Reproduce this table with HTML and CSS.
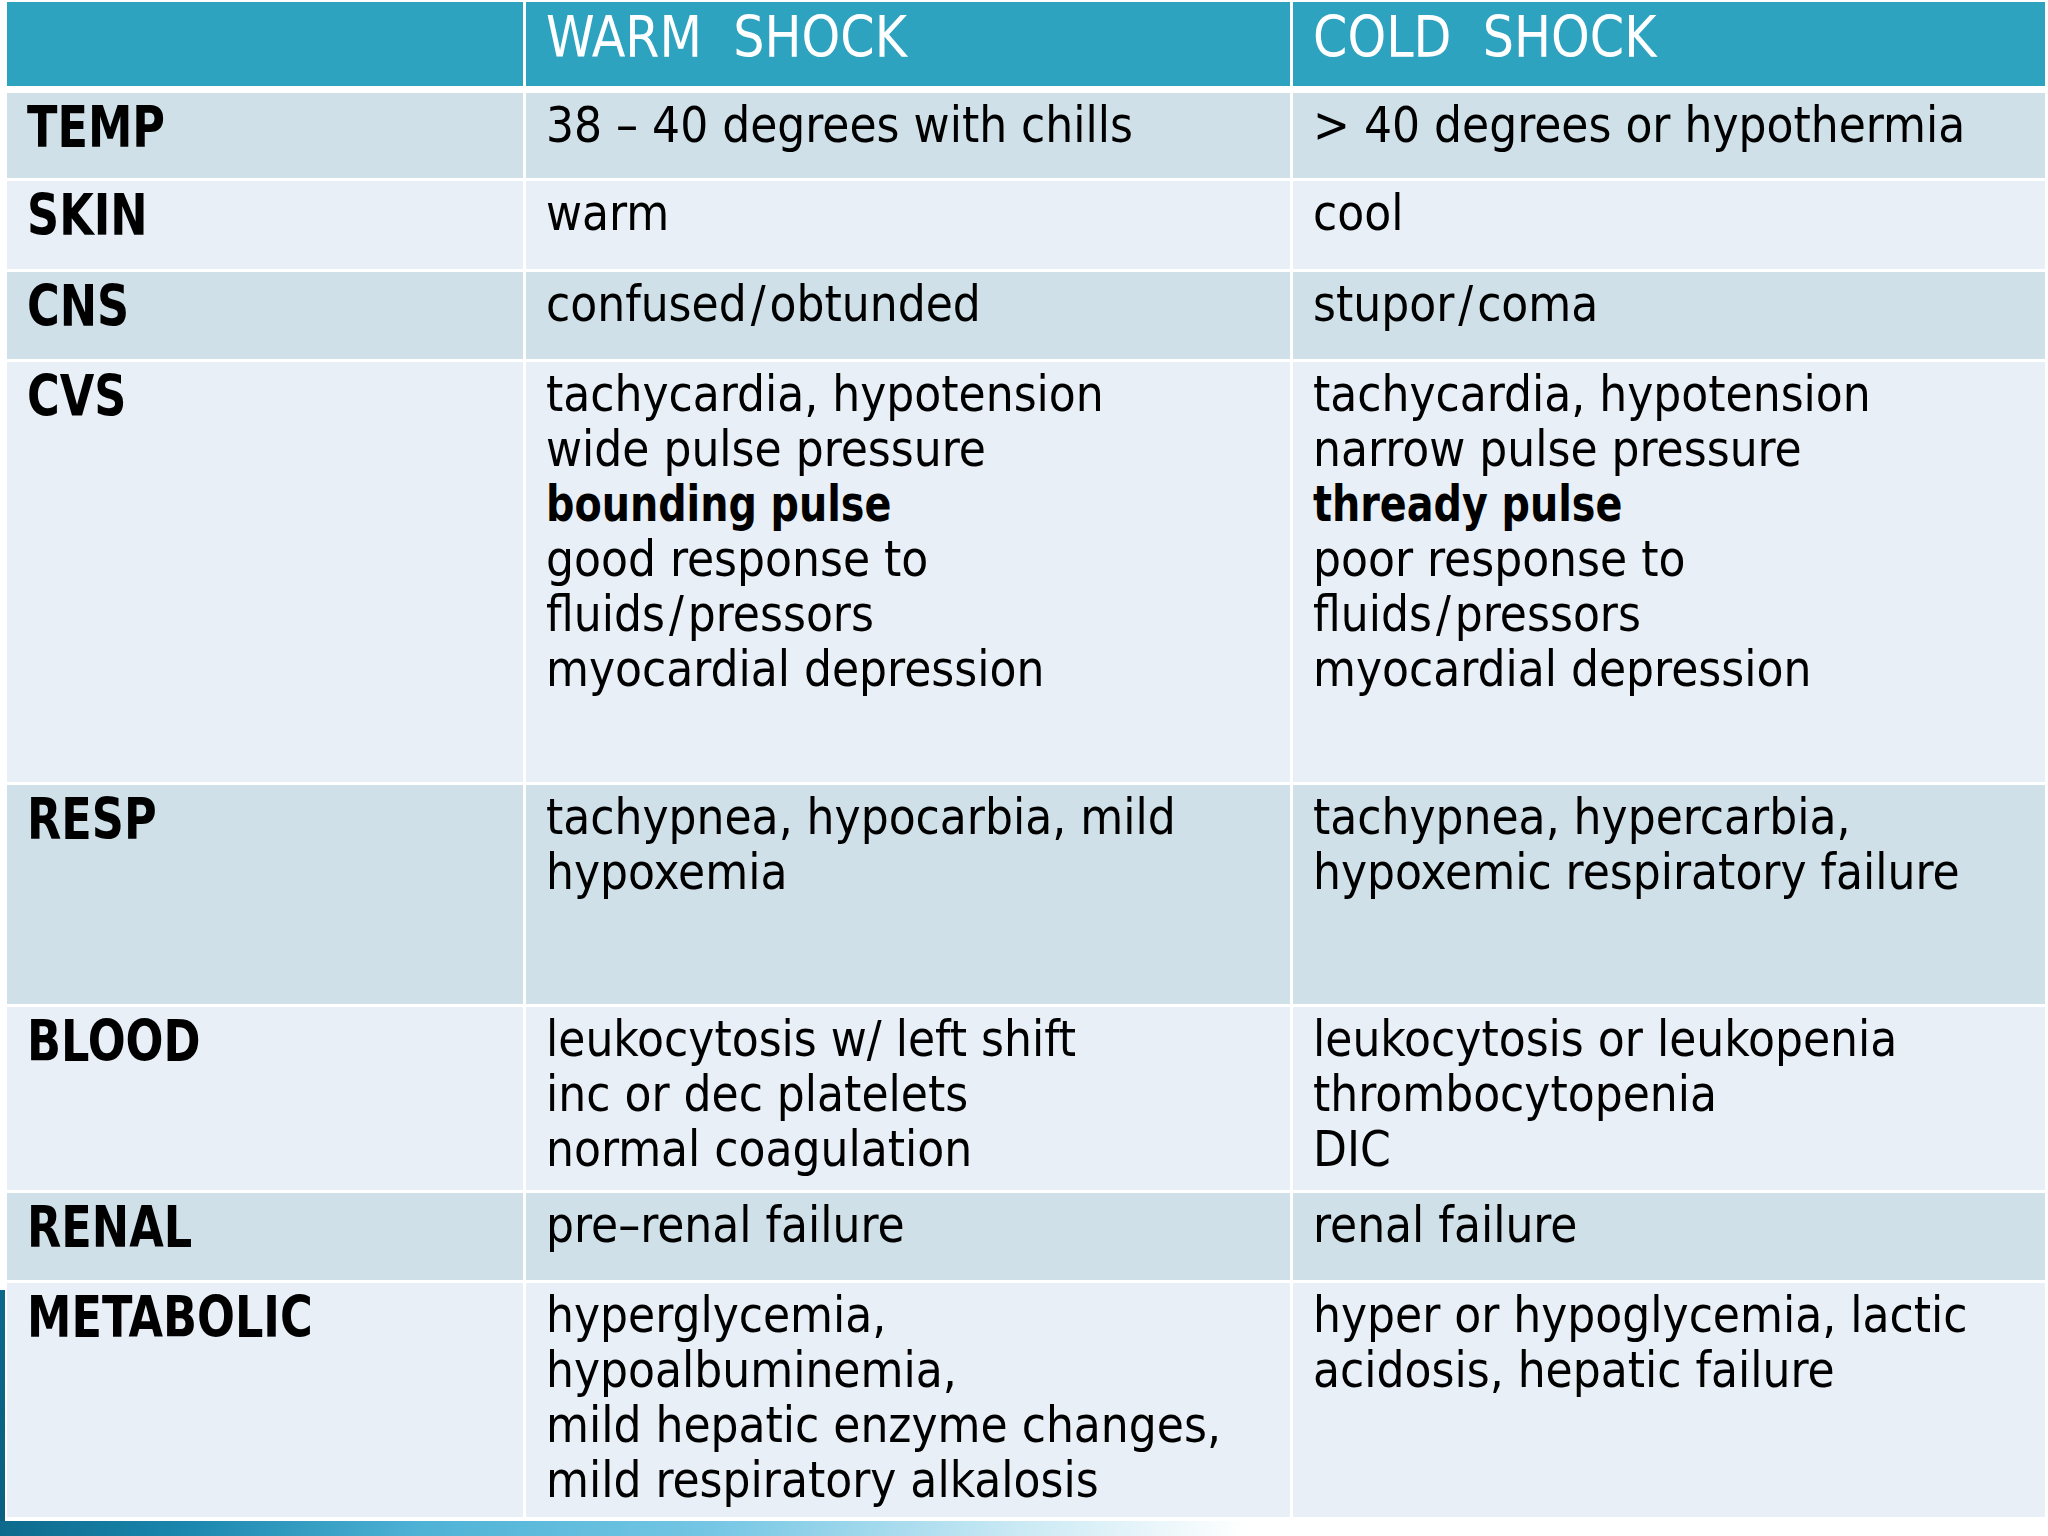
FILE: index.html
```html
<!DOCTYPE html>
<html lang="en">
<head>
<meta charset="utf-8">
<title>Warm vs Cold Shock</title>
<link rel="stylesheet" href="styles.css">
</head>
<body>
<div class="slide">
  <div class="table">
    <div class="cell head"></div>
    <div class="cell head"><span class="ht">WARM&nbsp; SHOCK</span></div>
    <div class="cell head"><span class="ht">COLD&nbsp; SHOCK</span></div>

    <div class="cell label odd"><span class="lt">TEMP</span></div>
    <div class="cell odd">38 – 40 degrees with chills</div>
    <div class="cell odd">&gt; 40 degrees or hypothermia</div>

    <div class="cell label even"><span class="lt">SKIN</span></div>
    <div class="cell even">warm</div>
    <div class="cell even">cool</div>

    <div class="cell label odd"><span class="lt">CNS</span></div>
    <div class="cell odd">confused<span class="sl">/</span>obtunded</div>
    <div class="cell odd">stupor<span class="sl">/</span>coma</div>

    <div class="cell label even"><span class="lt">CVS</span></div>
    <div class="cell even">tachycardia, hypotension<br>wide pulse pressure<br><b>bounding pulse</b><br>good response to<br>fluids<span class="sl">/</span>pressors<br>myocardial depression</div>
    <div class="cell even">tachycardia, hypotension<br>narrow pulse pressure<br><b>thready pulse</b><br>poor response to<br>fluids<span class="sl">/</span>pressors<br>myocardial depression</div>

    <div class="cell label odd"><span class="lt">RESP</span></div>
    <div class="cell odd">tachypnea, hypocarbia, mild<br>hypoxemia</div>
    <div class="cell odd">tachypnea, hypercarbia,<br>hypoxemic respiratory failure</div>

    <div class="cell label even"><span class="lt">BLOOD</span></div>
    <div class="cell even">leukocytosis w/ left shift<br>inc or dec platelets<br>normal coagulation</div>
    <div class="cell even">leukocytosis or leukopenia<br>thrombocytopenia<br>DIC</div>

    <div class="cell label odd"><span class="lt">RENAL</span></div>
    <div class="cell odd">pre–renal failure</div>
    <div class="cell odd">renal failure</div>

    <div class="cell label even"><span class="lt">METABOLIC</span></div>
    <div class="cell even">hyperglycemia,<br>hypoalbuminemia,<br>mild hepatic enzyme changes,<br>mild respiratory alkalosis</div>
    <div class="cell even">hyper or hypoglycemia, lactic<br>acidosis, hepatic failure</div>
  </div>
</div>
</body>
</html>
```

FILE: styles.css
```css
html, body {
  margin: 0;
  padding: 0;
  background: #ffffff;
}

.slide {
  width: 2048px;
  height: 1536px;
  box-sizing: border-box;
  padding: 2px 3px 0 7px;
  background-color: #ffffff;
  background-image:
    linear-gradient(100deg, #0d6a8c 0px, #1a86ad 180px, #4fb3d6 420px, #74c6e4 700px, #c9e9f4 1000px, rgba(255,255,255,0) 1230px),
    linear-gradient(180deg, #0c6889, #0b5f80);
  background-repeat: no-repeat;
  background-size: 1300px 16px, 5px 250px;
  background-position: 0 1521px, 0 1290px;
  font-family: "DejaVu Sans Condensed", "DejaVu Sans", sans-serif;
  font-stretch: semi-condensed;
  color: #000000;
}

.table {
  display: grid;
  grid-template-columns: 516px 764px 752px;
  grid-template-rows: 88px 85px 88px 87px 420px 219px 183px 87px 234px;
  column-gap: 3px;
  row-gap: 3px;
  background: #ffffff;
}

.cell {
  box-sizing: border-box;
  padding: 5px 18px 0 20px;
  font-size: 49px;
  line-height: 55px;
  white-space: nowrap;
}

.head {
  background: #2ea3bf;
  color: #ffffff;
  font-size: 57px;
  line-height: 62px;
  padding-top: 4px;
  margin-bottom: 4px;
}

.ht {
  display: inline-block;
  transform: scaleX(0.96);
  transform-origin: left center;
}

.label {
  font-weight: bold;
  font-size: 57px;
  line-height: 55px;
  padding-top: 7px;
}

.lt {
  display: inline-block;
  transform: scaleX(0.87);
  transform-origin: left center;
}

.sl {
  padding: 0 4px;
}

.odd {
  background: #cfe0e8;
}

.even {
  background: #e8eff6;
}

b {
  font-weight: bold;
  display: inline-block;
  transform: scaleX(0.9);
  transform-origin: left center;
}
```
